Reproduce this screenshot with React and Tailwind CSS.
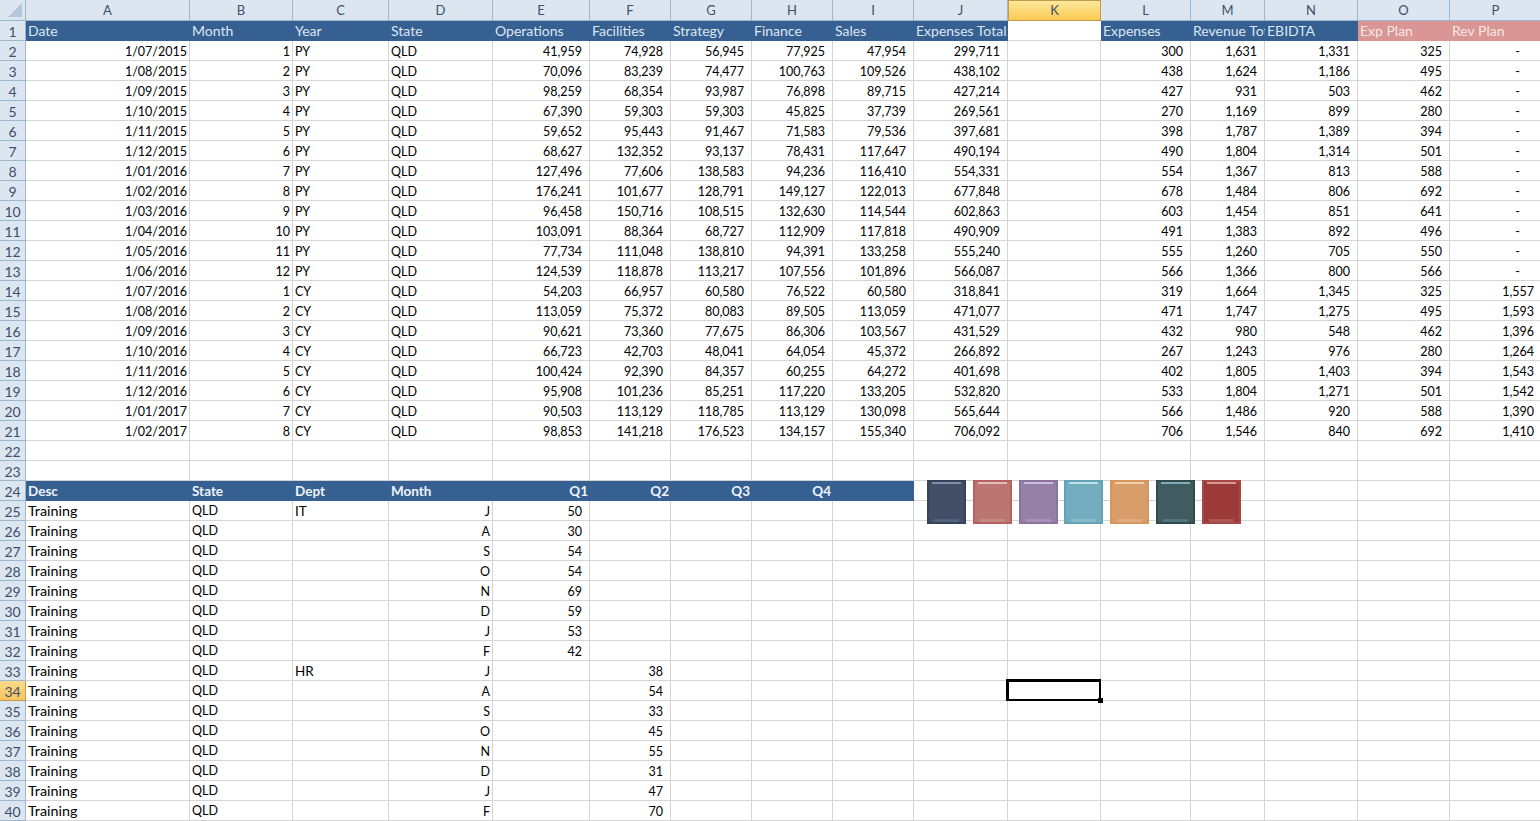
const COLS = "grid grid-cols-[26px_164px_103px_96px_104px_97px_81px_81px_81px_81px_94px_93px_90px_74px_93px_92px_92px]";
const LETTERS = "ABCDEFGHIJKLMNOP".split("");

const topRows = [
  ["1/07/2015", 1, "PY", "41,959", "74,928", "56,945", "77,925", "47,954", "299,711", "300", "1,631", "1,331", "325", "-"],
  ["1/08/2015", 2, "PY", "70,096", "83,239", "74,477", "100,763", "109,526", "438,102", "438", "1,624", "1,186", "495", "-"],
  ["1/09/2015", 3, "PY", "98,259", "68,354", "93,987", "76,898", "89,715", "427,214", "427", "931", "503", "462", "-"],
  ["1/10/2015", 4, "PY", "67,390", "59,303", "59,303", "45,825", "37,739", "269,561", "270", "1,169", "899", "280", "-"],
  ["1/11/2015", 5, "PY", "59,652", "95,443", "91,467", "71,583", "79,536", "397,681", "398", "1,787", "1,389", "394", "-"],
  ["1/12/2015", 6, "PY", "68,627", "132,352", "93,137", "78,431", "117,647", "490,194", "490", "1,804", "1,314", "501", "-"],
  ["1/01/2016", 7, "PY", "127,496", "77,606", "138,583", "94,236", "116,410", "554,331", "554", "1,367", "813", "588", "-"],
  ["1/02/2016", 8, "PY", "176,241", "101,677", "128,791", "149,127", "122,013", "677,848", "678", "1,484", "806", "692", "-"],
  ["1/03/2016", 9, "PY", "96,458", "150,716", "108,515", "132,630", "114,544", "602,863", "603", "1,454", "851", "641", "-"],
  ["1/04/2016", 10, "PY", "103,091", "88,364", "68,727", "112,909", "117,818", "490,909", "491", "1,383", "892", "496", "-"],
  ["1/05/2016", 11, "PY", "77,734", "111,048", "138,810", "94,391", "133,258", "555,240", "555", "1,260", "705", "550", "-"],
  ["1/06/2016", 12, "PY", "124,539", "118,878", "113,217", "107,556", "101,896", "566,087", "566", "1,366", "800", "566", "-"],
  ["1/07/2016", 1, "CY", "54,203", "66,957", "60,580", "76,522", "60,580", "318,841", "319", "1,664", "1,345", "325", "1,557"],
  ["1/08/2016", 2, "CY", "113,059", "75,372", "80,083", "89,505", "113,059", "471,077", "471", "1,747", "1,275", "495", "1,593"],
  ["1/09/2016", 3, "CY", "90,621", "73,360", "77,675", "86,306", "103,567", "431,529", "432", "980", "548", "462", "1,396"],
  ["1/10/2016", 4, "CY", "66,723", "42,703", "48,041", "64,054", "45,372", "266,892", "267", "1,243", "976", "280", "1,264"],
  ["1/11/2016", 5, "CY", "100,424", "92,390", "84,357", "60,255", "64,272", "401,698", "402", "1,805", "1,403", "394", "1,543"],
  ["1/12/2016", 6, "CY", "95,908", "101,236", "85,251", "117,220", "133,205", "532,820", "533", "1,804", "1,271", "501", "1,542"],
  ["1/01/2017", 7, "CY", "90,503", "113,129", "118,785", "113,129", "130,098", "565,644", "566", "1,486", "920", "588", "1,390"],
  ["1/02/2017", 8, "CY", "98,853", "141,218", "176,523", "134,157", "155,340", "706,092", "706", "1,546", "840", "692", "1,410"],
];

const bottomRows = [
  ["IT", "J", "50", ""], ["", "A", "30", ""], ["", "S", "54", ""], ["", "O", "54", ""],
  ["", "N", "69", ""], ["", "D", "59", ""], ["", "J", "53", ""], ["", "F", "42", ""],
  ["HR", "J", "", "38"], ["", "A", "", "54"], ["", "S", "", "33"], ["", "O", "", "45"],
  ["", "N", "", "55"], ["", "D", "", "31"], ["", "J", "", "47"], ["", "F", "", "70"],
];

const swatches = [
  { bg: "bg-[#434f66]", edge: "border-[#364256]", shine: "bg-[#8fa0c0]", foot: "bg-[#566c8c]" },
  { bg: "bg-[#bb7573]", edge: "border-[#b8605e]", shine: "bg-[#f0cfcd]", foot: "bg-[#c99492]" },
  { bg: "bg-[#9580a8]", edge: "border-[#8a739e]", shine: "bg-[#dcd0e8]", foot: "bg-[#ac9bbc]" },
  { bg: "bg-[#74adbf]", edge: "border-[#64a2b5]", shine: "bg-[#d3eef5]", foot: "bg-[#95c3d0]" },
  { bg: "bg-[#d99d6a]", edge: "border-[#d6965e]", shine: "bg-[#f8dfc4]", foot: "bg-[#e2b48e]" },
  { bg: "bg-[#405c60]", edge: "border-[#304a4e]", shine: "bg-[#8fc4c4]", foot: "bg-[#5a8084]" },
  { bg: "bg-[#9b3a38]", edge: "border-[#a84846]", shine: "bg-[#e8b4b2]", foot: "bg-[#b56462]" },
];

const cell = "h-full min-w-0 overflow-hidden whitespace-nowrap flex items-center border-r border-b border-[#d4d4d4] px-[2px] pt-[3px] text-black text-[12.5px]";
const right = "justify-end";
const num = "justify-end pr-[7px]";

const RowHead = ({ n, active }) => (
  <div
    className={
      active
        ? "h-full flex items-center justify-center pt-[2px] border-r border-b border-[#c29a4a] bg-gradient-to-b from-[#f9d98a] to-[#f7c65e] text-[#3e4f6b] text-[14px]"
        : "h-full flex items-center justify-center pt-[2px] border-r border-b border-[#9eb6ce] bg-[#dce6f1] text-[#3e4f6b] text-[14px]"
    }
  >
    {n}
  </div>
);

const ColumnHeaders = () => (
  <div className={`${COLS} h-[21px]`}>
    <div className="h-full border-r border-b border-[#9eb6ce] bg-[#dce6f1] flex items-end justify-end p-[3px]">
      <svg width="14" height="14" viewBox="0 0 14 14">
        <path d="M14 0V14H0Z" fill="#b5c6da" />
      </svg>
    </div>
    {LETTERS.map((l) => (
      <div
        key={l}
        className={
          l === "K"
            ? "h-full flex items-center justify-center border-x border-y border-[#c29a4a] bg-gradient-to-b from-[#fde89a] to-[#fbc94f] text-[#3e4f6b]"
            : "h-full flex items-center justify-center border-r border-b border-[#9eb6ce] bg-[#dce6f1] text-[#3e4f6b]"
        }
      >
        {l}
      </div>
    ))}
  </div>
);

const HeaderOne = () => {
  const blue = "h-full min-w-0 overflow-hidden whitespace-nowrap flex items-center px-[2px] pr-0 bg-[#366092] text-[#dce6f1] text-[14px]";
  const pink = "h-full min-w-0 overflow-hidden whitespace-nowrap flex items-center px-[2px] bg-[#da9694] text-[#f6e6e5] text-[14px]";
  return (
    <div className={`${COLS} h-[20px]`}>
      <RowHead n={1} />
      {["Date", "Month", "Year", "State", "Operations", "Facilities", "Strategy", "Finance", "Sales", "Expenses Total"].map((t) => (
        <div key={t} className={blue}>{t}</div>
      ))}
      <div className="h-full border-b border-[#d4d4d4] bg-white" />
      {["Expenses", "Revenue Total", "EBIDTA"].map((t) => (
        <div key={t} className={blue}>{t}</div>
      ))}
      <div className={pink}>Exp Plan</div>
      <div className={pink}>Rev Plan</div>
    </div>
  );
};

const TopRow = ({ n, r }) => (
  <div className={`${COLS} h-[20px]`}>
    <RowHead n={n} />
    <div className={`${cell} ${right}`}>{r[0]}</div>
    <div className={`${cell} ${right}`}>{r[1]}</div>
    <div className={cell}>{r[2]}</div>
    <div className={cell}>QLD</div>
    {r.slice(3, 9).map((v, i) => (
      <div key={i} className={`${cell} ${num}`}>{v}</div>
    ))}
    <div className={cell} />
    {r.slice(9, 13).map((v, i) => (
      <div key={i} className={`${cell} ${num}`}>{v}</div>
    ))}
    <div className={`${cell} ${r[13] === "-" ? "justify-end pr-[21px]" : num}`}>{r[13]}</div>
  </div>
);

const BlankRow = ({ n }) => (
  <div className={`${COLS} h-[20px]`}>
    <RowHead n={n} />
    {LETTERS.map((l) => (
      <div key={l} className={cell} />
    ))}
  </div>
);

const HeaderTwo = () => {
  const blue = "h-full min-w-0 overflow-hidden whitespace-nowrap flex items-center px-[2px] pt-[1px] bg-[#366092] text-[#eef3f9] font-bold text-[13.5px]";
  return (
    <div className={`${COLS} h-[20px]`}>
      <RowHead n={24} />
      {["Desc", "State", "Dept", "Month"].map((t) => (
        <div key={t} className={blue}>{t}</div>
      ))}
      {["Q1", "Q2", "Q3", "Q4"].map((t) => (
        <div key={t} className={`${blue} justify-end`}>{t}</div>
      ))}
      <div className="h-full bg-[#366092]" />
      {LETTERS.slice(9).map((l) => (
        <div key={l} className={cell} />
      ))}
    </div>
  );
};

const BottomRow = ({ n, r }) => (
  <div className={`${COLS} h-[20px]`}>
    <RowHead n={n} active={n === 34} />
    <div className={cell}><span className="text-[14.3px] -translate-y-px">Training</span></div>
    <div className={cell}><span className="-translate-y-px">QLD</span></div>
    <div className={cell}><span className="text-[13.5px]">{r[0]}</span></div>
    <div className={`${cell} ${right}`}>{r[1]}</div>
    <div className={`${cell} ${num}`}>{r[2]}</div>
    <div className={`${cell} ${num}`}>{r[3]}</div>
    {LETTERS.slice(6).map((l) => (
      <div key={l} className={cell} />
    ))}
  </div>
);

const Swatch = ({ s }) => (
  <div className={`relative h-[44px] w-[39px] border-2 ${s.edge} ${s.bg} nth-[4]:-ml-px`}>
    <div className={`absolute left-[3px] right-[3px] top-0 h-[2px] opacity-80 blur-[0.5px] ${s.shine}`} />
    <div className={`absolute left-[5px] right-[5px] bottom-0 h-[3px] opacity-70 blur-[0.5px] ${s.foot}`} />
  </div>
);

export default function App() {
  return (
    <div className="relative h-[821px] w-[1540px] overflow-hidden bg-white font-['Lato','Liberation_Sans',sans-serif] text-[13px] leading-none">
      <ColumnHeaders />
      <HeaderOne />
      {topRows.map((r, i) => (
        <TopRow key={i} n={i + 2} r={r} />
      ))}
      <BlankRow n={22} />
      <BlankRow n={23} />
      <HeaderTwo />
      {bottomRows.map((r, i) => (
        <BottomRow key={i} n={i + 25} r={r} />
      ))}

      {/* shapes floating over the sheet */}
      <div className="absolute left-[927px] top-[480px] flex gap-[7px]">
        {swatches.map((s, i) => (
          <Swatch key={i} s={s} />
        ))}
      </div>

      {/* active cell */}
      <div className="absolute left-[1006px] top-[679px] h-[22px] w-[95px] border-t-[3px] border-l-[3px] border-r-2 border-b-2 border-black">
        <div className="absolute -bottom-[4px] -right-[4px] h-[5px] w-[5px] bg-black" />
      </div>
    </div>
  );
}
